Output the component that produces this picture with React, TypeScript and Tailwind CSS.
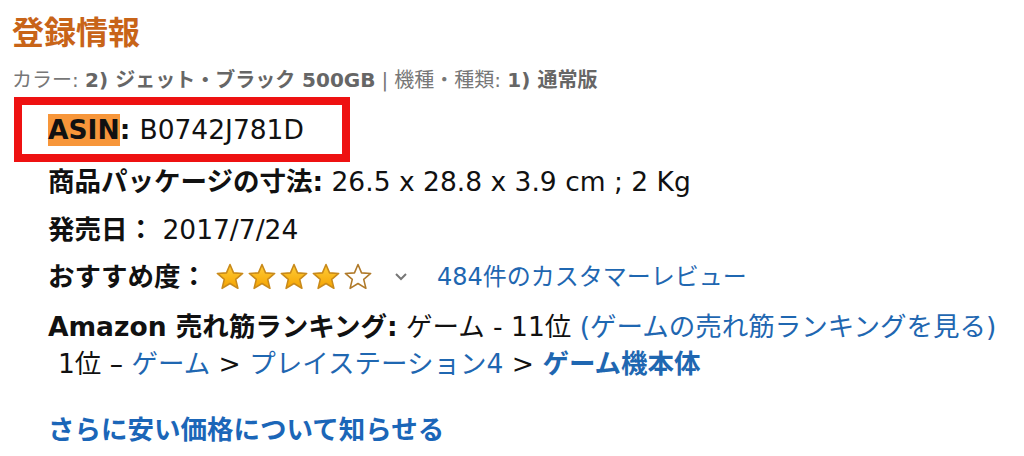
import React from "react";

const font = { fontFamily: '"DejaVu Sans", "Noto Sans CJK JP", sans-serif' };

function Star({ filled }: { filled: boolean }) {
  return (
    <svg width="30" height="28" viewBox="0 0 24 23" className="block">
      <defs>
        <linearGradient id="sg" x1="0" y1="0" x2="0" y2="1">
          <stop offset="0" stopColor="#ffce3a" />
          <stop offset="1" stopColor="#f5a300" />
        </linearGradient>
      </defs>
      <path
        d="M12 1.2 L14.9 8.1 L22.4 8.6 L16.7 13.4 L18.5 20.8 L12 16.8 L5.5 20.8 L7.3 13.4 L1.6 8.6 L9.1 8.1 Z"
        fill={filled ? "url(#sg)" : "#ffffff"}
        stroke={filled ? "#c98a1a" : "#b07a2a"}
        strokeWidth="1.3"
        strokeLinejoin="round"
      />
    </svg>
  );
}

export default function App() {
  return (
    <div className="w-[1024px] h-[456px] bg-white overflow-hidden text-[#111]" style={font}>
      <div className="pl-[12px] pt-[12px]">
        <div className="text-[32px] leading-[36px] font-bold text-[#c86418]" style={{ fontFamily: '"Noto Sans CJK JP", sans-serif' }}>
          登録情報
        </div>
        <div className="mt-[20px] text-[20px] leading-[24px] text-[#777] flex items-center">
          <span>カラー:&nbsp;</span>
          <span className="font-bold text-[#666]">2) ジェット・ブラック 500GB</span>
          <span className="mx-[6px]">|</span>
          <span>機種・種類:&nbsp;</span>
          <span className="font-bold text-[#666]">1) 通常版</span>
        </div>
        <div className="mt-[5px] ml-[2px] w-[336px] h-[65px] border-[8px] border-[#ee1111] flex items-center pl-[26px]">
          <div className="text-[26.5px] leading-[32px] flex items-center">
            <span className="bg-[#f7963a] font-bold">ASIN</span>
            <span className="font-bold">:&nbsp;</span>
            <span>B0742J781D</span>
          </div>
        </div>
        <div className="pl-[36px] text-[26.5px] leading-[32px]">
          <div className="mt-[4px]">
            <span className="font-bold">商品パッケージの寸法:</span> 26.5 x 28.8 x 3.9 cm ; 2 Kg
          </div>
          <div className="mt-[16px]">
            <span className="font-bold">発売日：</span> 2017/7/24
          </div>
          <div className="mt-[15px] flex items-center h-[32px]">
            <span className="font-bold">おすすめ度：</span>
            <span className="flex ml-[8px] gap-[2px]">
              <Star filled />
              <Star filled />
              <Star filled />
              <Star filled />
              <Star filled={false} />
            </span>
            <svg width="14" height="10" viewBox="0 0 14 10" className="ml-[21px]">
              <path d="M2 2 L7 7 L12 2" fill="none" stroke="#777" strokeWidth="2" />
            </svg>
            <span className="ml-[29px] text-[24px] text-[#1f67b1]">484件のカスタマーレビュー</span>
          </div>
          <div className="mt-[18px]">
            <span className="font-bold">Amazon 売れ筋ランキング:</span> ゲーム - 11位{" "}
            <span className="text-[#1f67b1]">(ゲームの売れ筋ランキングを見る)</span>
          </div>
          <div className="mt-[5px] pl-[10px]">
            1位 – <span className="text-[#1f67b1]">ゲーム</span> &gt;{" "}
            <span className="text-[#1f67b1]">プレイステーション4</span> &gt;{" "}
            <span className="text-[#1f67b1] font-bold">ゲーム機本体</span>
          </div>
          <div className="mt-[34px] text-[#1b66b8] font-bold">さらに安い価格について知らせる</div>
        </div>
      </div>
    </div>
  );
}
